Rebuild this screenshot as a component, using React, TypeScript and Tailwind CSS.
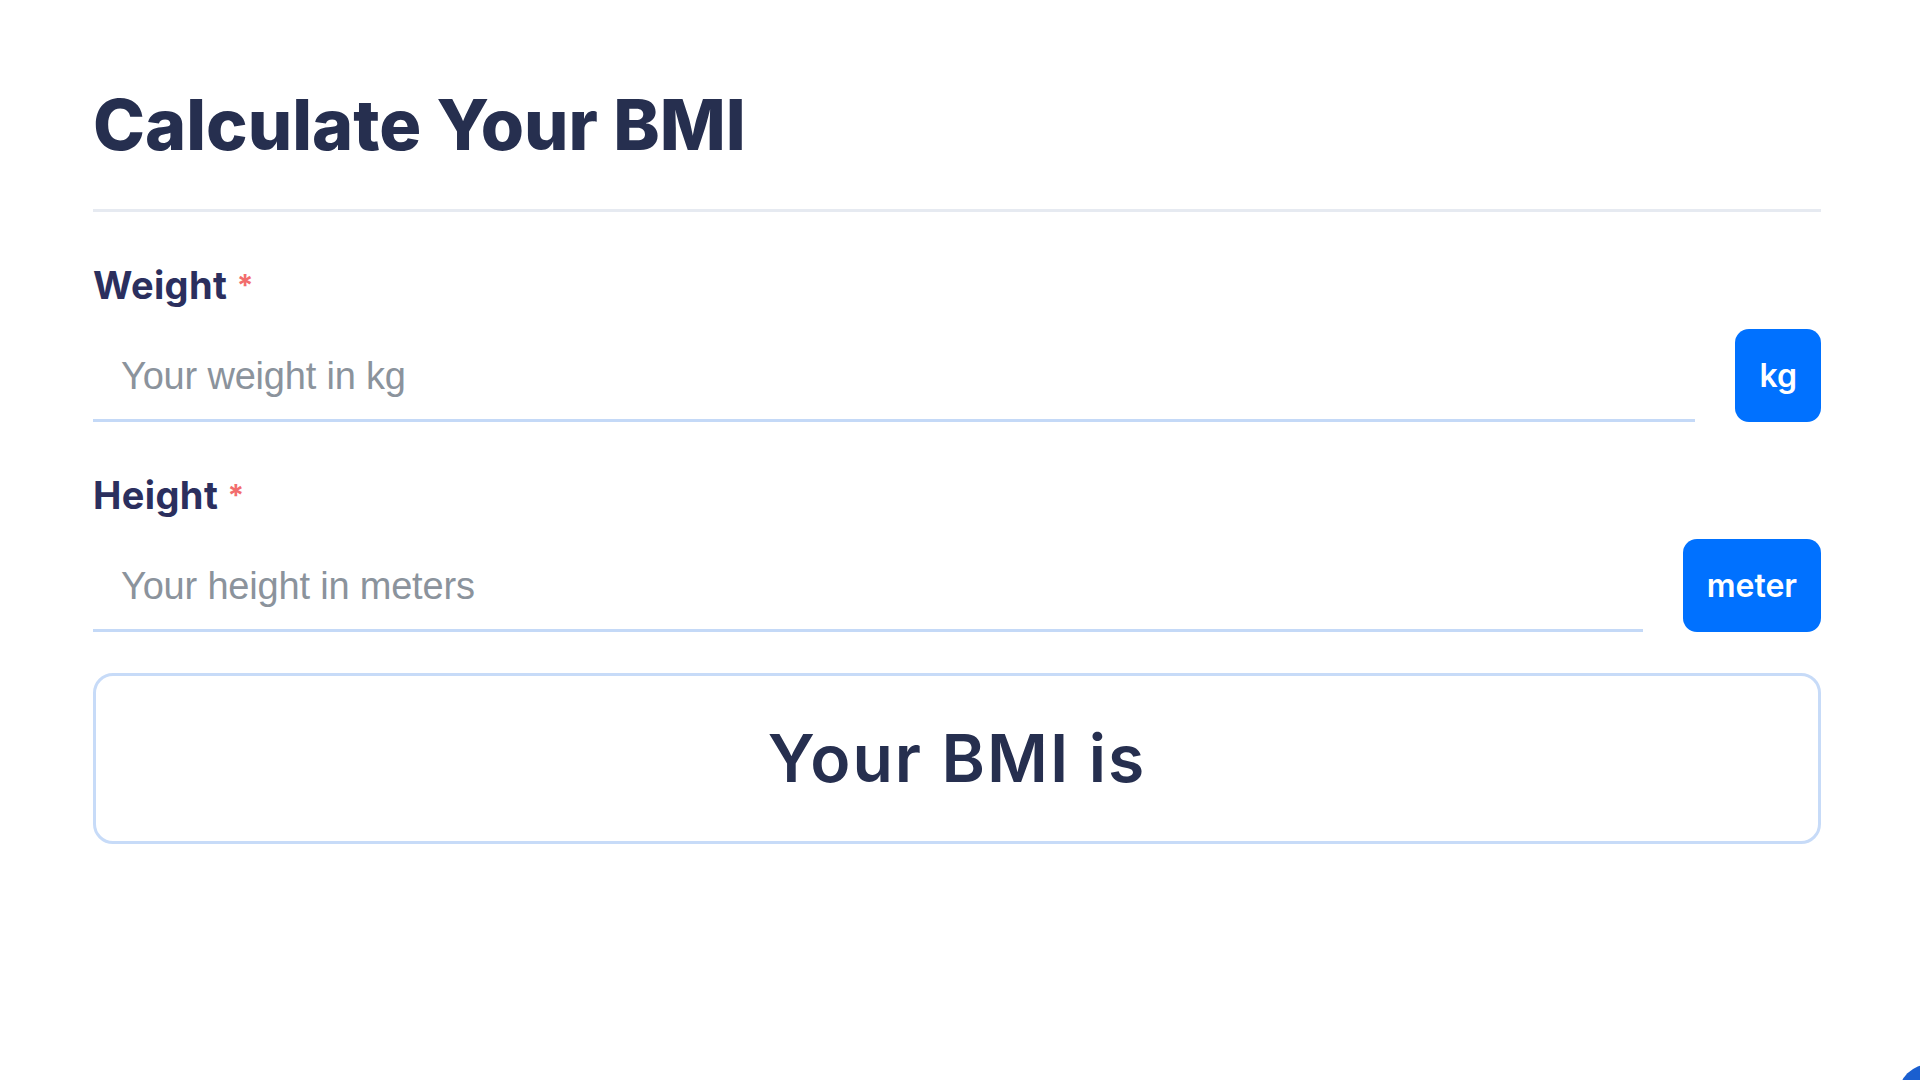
import { useState } from "react";

function Field({
  label,
  placeholder,
  unit,
  value,
  onChange,
}: {
  label: string;
  placeholder: string;
  unit: string;
  value: string;
  onChange: (v: string) => void;
}) {
  return (
    <div>
      <label className="block text-[38px] leading-[46px] font-bold tracking-[0.01em] text-[#2b2f5e]">
        {label} <span className="text-[30px] text-[#f26d6d] align-top">*</span>
      </label>
      <div className="mt-[21px] flex items-stretch gap-10 h-[93px]">
        <input
          type="text"
          value={value}
          onChange={(e) => onChange(e.target.value)}
          placeholder={placeholder}
          className="flex-1 min-w-0 bg-transparent border-b-[3px] border-[#c4d9f7] px-7 pt-1 text-[38px] tracking-[-0.005em] text-[#263050] placeholder:text-[#8b939c] outline-none font-['Liberation_Sans',Arial,sans-serif]"
        />
        <button className="rounded-[14px] bg-[#0071ff] px-6 text-[32px] font-semibold text-white">
          {unit}
        </button>
      </div>
    </div>
  );
}

export default function App() {
  const [weight, setWeight] = useState("");
  const [height, setHeight] = useState("");

  const w = parseFloat(weight);
  const h = parseFloat(height);
  const bmi = w > 0 && h > 0 ? (w / (h * h)).toFixed(1) : "";

  return (
    <div className="relative min-h-screen overflow-hidden bg-white font-['Inter',sans-serif]">
      <div className="pl-[93px] pr-[99px] pt-[83px]">
        <h1 className="text-[70px] leading-[84px] font-extrabold text-[#262f4f]">
          Calculate Your BMI
        </h1>
        <hr className="mt-[42px] border-0 h-[3px] bg-[#e6eaf1]" />

        <div className="mt-[50px] flex flex-col gap-[50px]">
          <Field
            label="Weight"
            placeholder="Your weight in kg"
            unit="kg"
            value={weight}
            onChange={setWeight}
          />
          <Field
            label="Height"
            placeholder="Your height in meters"
            unit="meter"
            value={height}
            onChange={setHeight}
          />
        </div>

        <div className="mt-[41px] flex h-[171px] items-center justify-center rounded-[20px] border-[3px] border-[#c7dbf8]">
          <p className="text-[66px] font-semibold tracking-[0.03em] text-[#262f4f]">Your BMI is {bmi}</p>
        </div>
      </div>

      <div className="fixed -right-[42px] -bottom-[48px] h-16 w-16 rounded-full bg-[#1a5fd0]" />
    </div>
  );
}
